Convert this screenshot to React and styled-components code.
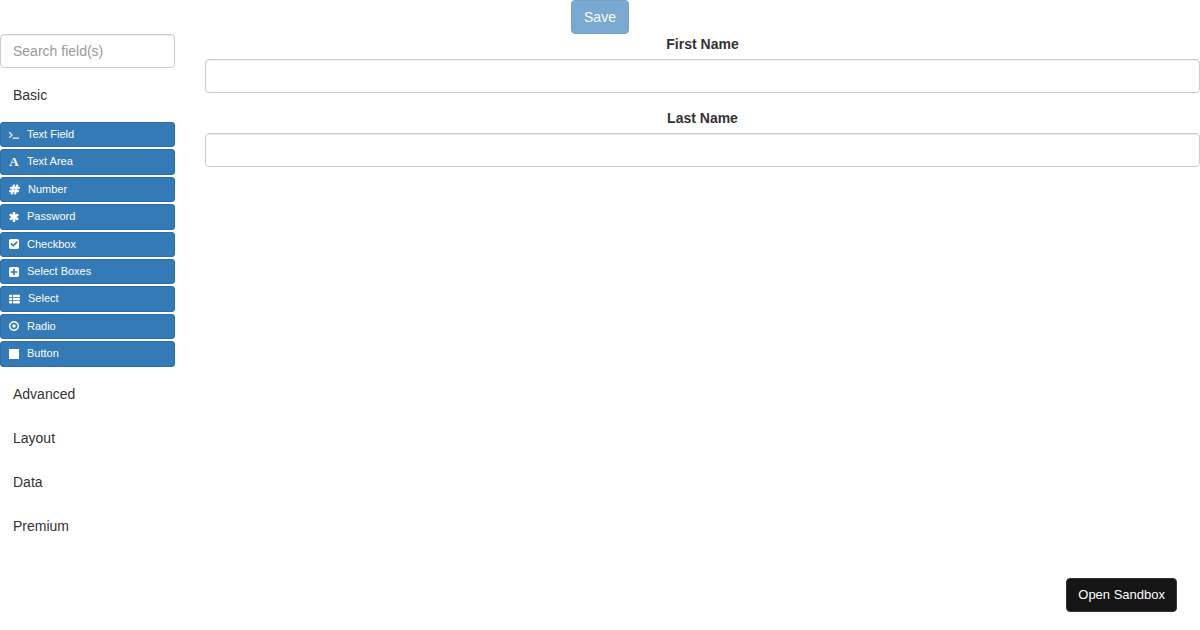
import React, { useState } from "react";

import { styled, createGlobalStyle } from "styled-components";

const GlobalStyle = createGlobalStyle`
  * {
    box-sizing: border-box;
  }

  body {
    margin: 0;
    font-family: "Liberation Sans", Arial, sans-serif;
    font-size: 14px;
    line-height: 20px;
    color: #333;
    background-color: #fff;
  }

  button,
  input {
    font-family: inherit;
  }
`;

const Toolbar = styled.div`
  display: flex;
  justify-content: center;
`;

const Button = styled.button`
  padding: 6px 12px;
  border: 1px solid transparent;
  border-radius: 4px;
  font-size: 14px;
  line-height: 20px;
  color: #fff;
  cursor: pointer;
`;

const SaveButton = styled(Button)`
  background-color: #337ab7;
  border-color: #2e6da4;

  &:disabled {
    opacity: 0.65;
    cursor: not-allowed;
  }
`;

const SandboxButton = styled(Button)`
  position: fixed;
  right: 23px;
  bottom: 18px;
  padding: 6px 11px;
  background-color: #151515;
  border-color: #343434;
  font-size: 13px;
`;

const Builder = styled.div`
  display: grid;
  grid-template-columns: repeat(12, 1fr);
  column-gap: 30px;
  align-items: start;
`;

const Sidebar = styled.aside`
  grid-column: span 2;
  display: flex;
  flex-direction: column;
  gap: 10px;
`;

const FormArea = styled.form`
  grid-column: span 10;
  display: flex;
  flex-direction: column;
  gap: 15px;
`;

const TextInput = styled.input`
  display: block;
  width: 100%;
  height: 34px;
  padding: 6px 12px;
  border: 1px solid #ccc;
  border-radius: 4px;
  font-size: 14px;
  color: #555;
  background-color: #fff;
  box-shadow: inset 0 1px 1px rgba(0, 0, 0, 0.075);

  &::placeholder {
    color: #999;
  }
`;

const FormGroup = styled.div`
  display: flex;
  flex-direction: column;
  gap: 5px;
`;

const FieldLabel = styled.label`
  font-weight: bold;
  text-align: center;
`;

const GroupButton = styled(Button)`
  background: none;
  color: #333;
  text-align: left;
`;

const ComponentList = styled.div`
  display: flex;
  flex-direction: column;
  gap: 2px;
`;

const ComponentButton = styled.button`
  display: flex;
  align-items: center;
  gap: 8px;
  padding: 4px 8px;
  border: 1px solid #2e6da4;
  border-radius: 3px;
  background-color: #337ab7;
  color: #fff;
  font-size: 11px;
  line-height: 1.4;
  cursor: pointer;
`;

const IconSvg = styled.svg`
  flex: none;
  width: ${(props) => (props.$wide ? "11px" : "10px")};
  height: ${(props) => (props.$wide ? "11px" : "10px")};
  fill: currentColor;
`;

const LetterIcon = styled.span`
  flex: none;
  display: flex;
  justify-content: center;
  width: 10px;
  padding-bottom: 1px;
  font-family: "Liberation Serif", "Times New Roman", serif;
  font-size: 13px;
  font-weight: bold;
  line-height: 1;
`;

function Icon({ wide, children }) {
  return (
    <IconSvg
      $wide={wide}
      viewBox={wide ? "0 0 1792 1792" : "128 128 1536 1536"}
      aria-hidden="true"
    >
      {children}
    </IconSvg>
  );
}

const icons = {
  terminal: (
    <IconSvg viewBox="77 128 1651 1651" aria-hidden="true">
      <path
        stroke="currentColor"
        strokeWidth="70"
        d="M649 983l-466 466q-10 10-23 10t-23-10l-50-50q-10-10-10-23t10-23l393-393-393-393q-10-10-10-23t10-23l50-50q10-10 23-10t23 10l466 466q10 10 10 23t-10 23zm1079 457v64q0 14-9 23t-23 9h-960q-14 0-23-9t-9-23v-64q0-14 9-23t23-9h960q14 0 23 9t9 23z"
      />
    </IconSvg>
  ),
  font: <LetterIcon aria-hidden="true">A</LetterIcon>,
  hashtag: (
    <Icon wide>
      <path
        stroke="currentColor"
        strokeWidth="70"
        d="M991 1024l64-256h-254l-64 256h254zm768-504l-56 224q-7 24-31 24h-327l-64 256h311q15 0 25 12 10 14 6 28l-56 224q-5 24-31 24h-327l-81 328q-7 24-31 24h-224q-16 0-26-12-9-12-6-28l78-312h-254l-81 328q-7 24-31 24h-225q-15 0-25-12-9-12-6-28l78-312h-311q-15 0-25-12-9-12-6-28l56-224q7-24 31-24h327l64-256h-311q-15 0-25-12-10-14-6-28l56-224q5-24 31-24h327l81-328q7-24 32-24h224q15 0 25 12 9 12 6 28l-78 312h254l81-328q7-24 32-24h224q15 0 25 12 9 12 6 28l-78 312h311q15 0 25 12 9 12 6 28z"
      />
    </Icon>
  ),
  asterisk: (
    <Icon>
      <path d="M1546 1050q46 26 59.5 77.5t-12.5 97.5l-64 110q-26 46-77.5 59.5t-97.5-12.5l-266-153v307q0 52-38 90t-90 38h-128q-52 0-90-38t-38-90v-307l-266 153q-46 26-97.5 12.5t-77.5-59.5l-64-110q-26-46-12.5-97.5t59.5-77.5l266-154-266-154q-46-26-59.5-77.5t12.5-97.5l64-110q26-46 77.5-59.5t97.5 12.5l266 153v-307q0-52 38-90t90-38h128q52 0 90 38t38 90v307l266-153q46-26 97.5-12.5t77.5 59.5l64 110q26 46 12.5 97.5t-59.5 77.5l-266 154z" />
    </Icon>
  ),
  checkSquare: (
    <Icon>
      <path d="M813 1299l614-614q19-19 19-45t-19-45l-102-102q-19-19-45-19t-45 19l-467 467-211-211q-19-19-45-19t-45 19l-102 102q-19 19-19 45t19 45l358 358q19 19 45 19t45-19zm851-883v960q0 119-84.5 203.5t-203.5 84.5h-960q-119 0-203.5-84.5t-84.5-203.5v-960q0-119 84.5-203.5t203.5-84.5h960q119 0 203.5 84.5t84.5 203.5z" />
    </Icon>
  ),
  plusSquare: (
    <Icon>
      <path d="M1408 960v-128q0-26-19-45t-45-19h-320v-320q0-26-19-45t-45-19h-128q-26 0-45 19t-19 45v320h-320q-26 0-45 19t-19 45v128q0 26 19 45t45 19h320v320q0 26 19 45t45 19h128q26 0 45-19t19-45v-320h320q26 0 45-19t19-45zm256-544v960q0 119-84.5 203.5t-203.5 84.5h-960q-119 0-203.5-84.5t-84.5-203.5v-960q0-119 84.5-203.5t203.5-84.5h960q119 0 203.5 84.5t84.5 203.5z" />
    </Icon>
  ),
  list: (
    <Icon wide>
      {[128, 640, 1152].map((y) => (
        <React.Fragment key={y}>
          <rect x="0" y={y} width="512" height="384" rx="96" />
          <rect x="640" y={y} width="1152" height="384" rx="96" />
        </React.Fragment>
      ))}
    </Icon>
  ),
  dotCircle: (
    <Icon>
      <path d="M1152 896q0 106-75 181t-181 75-181-75-75-181 75-181 181-75 181 75 75 181zm-256-544q-148 0-273 73t-198 198-73 273 73 273 198 198 273 73 273-73 198-198 73-273-73-273-198-198-273-73zm768 544q0 209-103 385.5t-279.5 279.5-385.5 103-385.5-103-279.5-279.5-103-385.5 103-385.5 279.5-279.5 385.5-103 385.5 103 279.5 279.5 103 385.5z" />
    </Icon>
  ),
  stop: (
    <Icon>
      <path d="M1664 192v1408q0 26-19 45t-45 19h-1408q-26 0-45-19t-19-45v-1408q0-26 19-45t45-19h1408q26 0 45 19t19 45z" />
    </Icon>
  ),
};

const groups = [
  {
    title: "Basic",
    components: [
      { label: "Text Field", icon: "terminal" },
      { label: "Text Area", icon: "font" },
      { label: "Number", icon: "hashtag" },
      { label: "Password", icon: "asterisk" },
      { label: "Checkbox", icon: "checkSquare" },
      { label: "Select Boxes", icon: "plusSquare" },
      { label: "Select", icon: "list" },
      { label: "Radio", icon: "dotCircle" },
      { label: "Button", icon: "stop" },
    ],
  },
  { title: "Advanced", components: [] },
  { title: "Layout", components: [] },
  { title: "Data", components: [] },
  { title: "Premium", components: [] },
];

const fields = [
  { id: "firstName", label: "First Name" },
  { id: "lastName", label: "Last Name" },
];

function App() {
  const [openGroup, setOpenGroup] = useState("Basic");
  const [search, setSearch] = useState("");

  const matchesSearch = (component) =>
    component.label.toLowerCase().includes(search.toLowerCase());

  return (
    <>
      <GlobalStyle />
      <Toolbar>
        <SaveButton type="button" disabled>
          Save
        </SaveButton>
      </Toolbar>
      <Builder>
        <Sidebar>
          <TextInput
            type="search"
            aria-label="Search field(s)"
            placeholder="Search field(s)"
            value={search}
            onChange={(e) => setSearch(e.target.value)}
          />
          {groups.map(({ title, components }) => (
            <React.Fragment key={title}>
              <GroupButton
                type="button"
                aria-expanded={openGroup === title}
                onClick={() => setOpenGroup(title)}
              >
                {title}
              </GroupButton>
              {openGroup === title && components.length > 0 && (
                <ComponentList>
                  {components.filter(matchesSearch).map(({ label, icon }) => (
                    <ComponentButton type="button" key={label}>
                      {icons[icon]}
                      {label}
                    </ComponentButton>
                  ))}
                </ComponentList>
              )}
            </React.Fragment>
          ))}
        </Sidebar>
        <FormArea onSubmit={(e) => e.preventDefault()}>
          {fields.map(({ id, label }) => (
            <FormGroup key={id}>
              <FieldLabel htmlFor={id}>{label}</FieldLabel>
              <TextInput type="text" id={id} name={id} />
            </FormGroup>
          ))}
        </FormArea>
      </Builder>
      <SandboxButton type="button">Open Sandbox</SandboxButton>
    </>
  );
}

export default App;
